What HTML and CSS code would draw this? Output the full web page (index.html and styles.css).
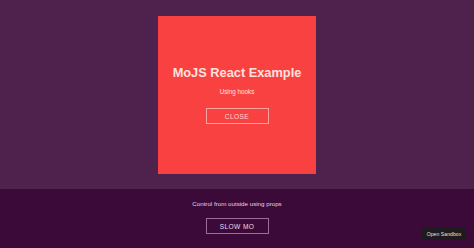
FILE: index.html
```html
<!doctype html>
<html>
<head>
  <title>MoJS React Example</title>
  <link rel="stylesheet" href="styles.css">
</head>
<body>
  <div class="stage">
    <div class="card">
      <h1 class="title">MoJS React Example</h1>
      <p class="subtitle">Using hooks</p>
      <button class="btn btn-close">CLOSE</button>
    </div>
  </div>
  <div class="controls">
    <p class="hint">Control from outside using props</p>
    <button class="btn btn-slow">SLOW MO</button>
  </div>
  <a class="sandbox">Open Sandbox</a>
</body>
</html>
```

FILE: styles.css
```css
html, body {
  margin: 0;
  height: 100%;
}

body {
  font-family: "Liberation Sans", Arial, sans-serif;
  display: flex;
  flex-direction: column;
  background: #3b0a39;
}

.stage {
  height: 189px;
  background: #4f214d;
  display: flex;
  align-items: center;
  justify-content: center;
}

.card {
  width: 158px;
  height: 158px;
  background: #fa4141;
  display: flex;
  flex-direction: column;
  align-items: center;
  justify-content: center;
  color: #fde3df;
}

.title {
  margin: 0;
  font-size: 12.8px;
  line-height: 15px;
  font-weight: bold;
}

.subtitle {
  margin: 8px 0 12px;
  font-size: 6.3px;
  line-height: 8px;
}

.btn {
  width: 63px;
  height: 16px;
  padding: 0;
  background: transparent;
  font-family: inherit;
  font-size: 6.6px;
  letter-spacing: 0.4px;
  cursor: pointer;
}

.btn-close {
  border: 1px solid #fca59f;
  color: #fdd8d3;
}

.controls {
  flex: 1;
  display: flex;
  flex-direction: column;
  align-items: center;
  padding-top: 10px;
}

.hint {
  margin: 0 0 9px;
  font-size: 6.2px;
  line-height: 10px;
  color: #e8d3e6;
}

.btn-slow {
  border: 1px solid #a06a9c;
  color: #ecdcea;
}

.sandbox {
  position: absolute;
  right: 8px;
  bottom: 8px;
  width: 44px;
  height: 12px;
  background: #1e1a1e;
  color: #e0e0e0;
  font-size: 5.2px;
  line-height: 12px;
  text-align: center;
  border-radius: 1px;
}
```
